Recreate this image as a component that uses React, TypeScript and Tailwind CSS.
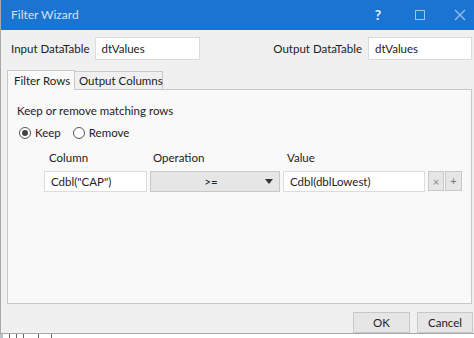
import { ReactNode } from 'react';

const font = { fontFamily: 'Lato, "Noto Sans", sans-serif' };

const Field = ({ value, className }: { value: string; className: string }) => (
  <div className={`flex items-center bg-white border border-[#dcdcdc] px-[6px] text-[11.5px] text-[#222] whitespace-nowrap ${className}`}>
    {value}
  </div>
);

const Btn = ({ children, className }: { children: ReactNode; className: string }) => (
  <div className={`flex items-center justify-center border border-[#c8c8c8] bg-[#e6e6e6] text-[11.5px] text-[#222] ${className}`}>
    {children}
  </div>
);

const Radio = ({ checked, label }: { checked?: boolean; label: string }) => (
  <div className="flex items-center gap-[4px]">
    <span className="flex items-center justify-center w-[12px] h-[12px] rounded-full border border-[#555] bg-white">
      {checked && <span className="w-[6px] h-[6px] rounded-full bg-[#444]" />}
    </span>
    <span>{label}</span>
  </div>
);

export default function App() {
  return (
    <div className="w-[474px] h-[338px] flex flex-col bg-white overflow-hidden whitespace-nowrap" style={font}>
      <div className="flex h-[334px]">
        <div className="w-[3px] bg-[#b9c3cc]" />
        <div className="flex-1 flex flex-col bg-[#f0f0f0] border-l border-b border-[#a8a8a8]">
          {/* title bar */}
          <div className="h-[30px] bg-[#1b74d1] flex items-center pl-[10px] text-[12px] text-[#d2e3f6]">
            <span className="flex-1">Filter Wizard</span>
            <span className="w-[36px] text-center text-[14px] font-bold text-[#e8f0fa]">?</span>
            <span className="w-[48px] flex justify-center">
              <span className="w-[10px] h-[10px] border border-[#9cc3ec]" />
            </span>
            <span className="w-[32px] flex justify-center">
              <svg width="12" height="12" viewBox="0 0 12 12">
                <path d="M1 1L11 11M11 1L1 11" stroke="#9cc3ec" strokeWidth="1.2" />
              </svg>
            </span>
          </div>

          {/* data tables */}
          <div className="flex items-center justify-between mt-[7px] pl-[10px] pr-[4px] text-[11.5px] text-[#222]">
            <div className="flex items-center gap-[5px]">
              <span>Input DataTable</span>
              <Field value="dtValues" className="w-[105px] h-[23px]" />
            </div>
            <div className="flex items-center gap-[6px]">
              <span>Output DataTable</span>
              <Field value="dtValues" className="w-[104px] h-[23px]" />
            </div>
          </div>

          {/* tabs */}
          <div className="flex items-end mt-[9px] pl-[6px] h-[20px] text-[11.5px] text-[#222]">
            <div className="w-[68px] h-[20px] pl-[6px] flex items-center bg-[#f9f9f9] border border-b-0 border-[#c8c8c8] relative top-[1px] z-10">
              Filter Rows
            </div>
            <div className="w-[88px] h-[18px] pl-[4px] flex items-center bg-[#f0f0f0] border border-b-0 border-l-0 border-[#c8c8c8]">
              Output Columns
            </div>
          </div>
          <div className="ml-[6px] mr-[4px] h-[216px] bg-[#f9f9f9] border border-[#c8c8c8] px-[9px] pt-[12px] text-[11.5px] text-[#222]">
            <div>Keep or remove matching rows</div>
            <div className="flex items-center gap-[12px] mt-[5px] ml-[2px]">
              <Radio checked label="Keep" />
              <Radio label="Remove" />
            </div>
            <div className="flex mt-[8px] ml-[32px]">
              <span className="w-[104px]">Column</span>
              <span className="w-[134px]">Operation</span>
              <span>Value</span>
            </div>
            <div className="flex items-center mt-[4px] ml-[27px]">
              <Field value={'Cdbl("CAP")'} className="w-[103px] h-[21px]" />
              <div className="ml-[3px] w-[130px] h-[21px] flex items-center border border-[#c8c8c8] bg-[#e6e6e6]">
                <span className="flex-1 text-center pl-[6px]">&gt;=</span>
                <svg width="8" height="5" viewBox="0 0 8 5" className="mr-[6px]">
                  <path d="M0 0H8L4 5Z" fill="#333" />
                </svg>
              </div>
              <Field value="Cdbl(dblLowest)" className="ml-[3px] w-[142px] h-[21px]" />
              <Btn className="ml-[3px] w-[16px] h-[20px] text-[10px] text-[#888]">×</Btn>
              <Btn className="ml-[1px] w-[17px] h-[20px] text-[11px] text-[#777]">+</Btn>
            </div>
          </div>

          {/* buttons */}
          <div className="flex justify-end gap-[7px] mt-[8px] pr-[3px]">
            <Btn className="w-[57px] h-[21px]">OK</Btn>
            <Btn className="w-[56px] h-[21px]">Cancel</Btn>
          </div>
        </div>
      </div>
      <div className="flex-1 flex bg-white">
        <div className="w-[3px] bg-[#b9c3cc]" />
        <div className="ml-[6px] w-px bg-[#666]" />
        <div className="ml-[6px] w-px bg-[#666]" />
        <div className="ml-[6px] w-px bg-[#666]" />
        <div className="ml-[14px] w-px bg-[#666]" />
        <div className="ml-[12px] w-px bg-[#666]" />
      </div>
    </div>
  );
}
